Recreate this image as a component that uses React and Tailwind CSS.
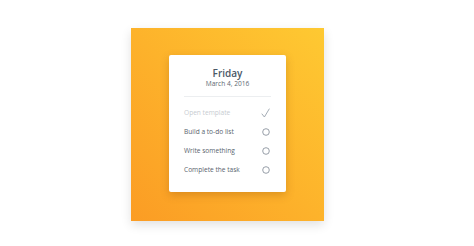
import React from 'react';

const tasks = [
  { id: 1, label: 'Open template', done: true },
  { id: 2, label: 'Build a to-do list', done: false },
  { id: 3, label: 'Write something', done: false },
  { id: 4, label: 'Complete the task', done: false },
];

const Check = () => (
  <svg width="9" height="10" viewBox="0 0 9 10" className="block">
    <path d="M1 6 L3.4 9 L8.2 1" fill="none" stroke="#9aa3ad" strokeWidth="0.9" strokeLinecap="round" strokeLinejoin="round" />
  </svg>
);

const Circle = () => (
  <svg width="8" height="8" viewBox="0 0 8 8" className="block">
    <circle cx="4" cy="4" r="3.3" fill="none" stroke="#7d8792" strokeWidth="0.8" />
  </svg>
);

export default function App() {
  return (
    <div className="w-[474px] h-[246px] bg-white pl-[131px] pt-[28px] font-['Open_Sans',sans-serif]">
      <div className="w-[193px] h-[193px] bg-linear-to-tr from-[#fb9c24] to-[#fec932] pl-[38px] pt-[27px] shadow-[0_4px_10px_rgba(0,0,0,0.12)]">
        <div className="w-[117px] h-[137px] bg-white rounded-[2px] shadow-[0_3px_8px_rgba(120,60,0,0.25)] px-[15px] pt-[11px]">
          <div className="flex flex-col items-center">
            <div className="text-[10px] leading-[14px] font-semibold text-[#4b5866]">Friday</div>
            <div className="text-[6.6px] leading-[8px] text-[#5e6873]">March 4, 2016</div>
          </div>
          <div className="h-px bg-[#eceef0] mt-[8px] mb-[6px]" />
          <div className="flex flex-col">
            {tasks.map((t) => (
              <div key={t.id} className="flex items-center justify-between h-[19px]">
                <span className={`text-[6.6px] ${t.done ? 'text-[#c7ccd1]' : 'text-[#59636e]'}`}>{t.label}</span>
                <span className="pr-[1px]">{t.done ? <Check /> : <Circle />}</span>
              </div>
            ))}
          </div>
        </div>
      </div>
    </div>
  );
}
